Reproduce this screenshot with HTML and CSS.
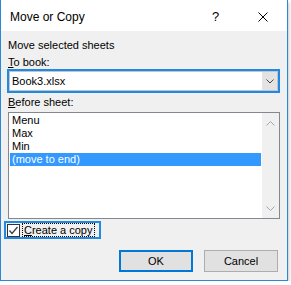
FILE: index.html
```html
<!DOCTYPE html>
<html lang="en">
<head>
  <meta charset="UTF-8">
  <title>Move or Copy</title>
  <link rel="stylesheet" href="styles.css">
</head>
<body>
  <div class="dialog">
    <!-- Заголовок окна -->
    <div class="titlebar">
      <span class="title">Move or Copy</span>
      <span class="help">?</span>
      <span class="close">
        <svg width="10" height="10" viewBox="0 0 10 10"><path d="M0.5 0.5 L9.5 9.5 M9.5 0.5 L0.5 9.5" stroke="#000" stroke-width="1" fill="none"/></svg>
      </span>
    </div>

    <div class="content">
      <div class="label">Move selected sheets</div>
      <div class="label gap-small"><u>T</u>o book:</div>

      <div class="combo-ring">
        <div class="combo">
          <span class="combo-value">Book3.xlsx</span>
          <span class="combo-btn">
            <svg width="8" height="5" viewBox="0 0 8 5"><polyline points="0.5,0.5 4,4 7.5,0.5" stroke="#444" stroke-width="1" fill="none"/></svg>
          </span>
        </div>
      </div>

      <div class="label gap-tiny"><u>B</u>efore sheet:</div>

      <div class="listbox">
        <ul class="items">
          <li>Menu</li>
          <li>Max</li>
          <li>Min</li>
          <li class="selected">(move to end)</li>
        </ul>
        <div class="scrollbar">
          <svg width="9" height="5" viewBox="0 0 9 5"><polyline points="0.5,4.5 4.5,0.5 8.5,4.5" stroke="#a6a6a6" stroke-width="1" fill="none"/></svg>
          <svg width="9" height="5" viewBox="0 0 9 5"><polyline points="0.5,0.5 4.5,4.5 8.5,0.5" stroke="#a6a6a6" stroke-width="1" fill="none"/></svg>
        </div>
      </div>

      <div class="check-ring">
        <span class="checkbox">
          <svg width="11" height="11" viewBox="0 0 11 11"><polyline points="1.5,5.5 4,8.5 9.5,2" stroke="#3c3c3c" stroke-width="1.3" fill="none"/></svg>
        </span>
        <span class="check-label"><u>C</u>reate a copy</span>
      </div>

      <div class="buttons">
        <button class="btn btn-default">OK</button>
        <button class="btn">Cancel</button>
      </div>
    </div>
  </div>
</body>
</html>
```

FILE: styles.css
```css
body {
  margin: 0;
  background: #fff;
  font-family: "Liberation Sans", Arial, sans-serif;
  color: #000;
}

/* Окно диалога */
.dialog {
  width: 286px;
  border: 1px solid #2a88d8;
  border-top: 0;
  box-shadow: 1px 2px 3px rgba(0, 0, 0, 0.22);
}

.titlebar {
  height: 31px;
  box-sizing: border-box;
  padding: 2px 19px 0 9px;
  display: flex;
  align-items: center;
  background: #fff;
  font-size: 12px;
}

.title {
  flex: 1;
}

.help {
  width: 8px;
  margin-right: 38px;
  font-size: 13px;
}

.close {
  display: flex;
  width: 10px;
}

/* Основная часть */
.content {
  height: 249px;
  box-sizing: border-box;
  padding: 8px 6px 8px 6px;
  background: #f0f0f0;
  font-size: 11px;
  line-height: 13px;
}

.label {
  padding-left: 1px;
}

.gap-small {
  margin-top: 4px;
}

.gap-tiny {
  margin-top: 3px;
}

.combo-ring {
  width: 273px;
  height: 24px;
  box-sizing: border-box;
  border: 2px solid #1e8ae6;
}

.combo {
  height: 20px;
  border: 1px solid #c4c4c4;
  box-sizing: border-box;
  background: #fff;
  display: flex;
  align-items: center;
}

.combo-value {
  flex: 1;
  padding-left: 2px;
}

.combo-btn {
  width: 15px;
  height: 18px;
  background: #e3e3e3;
  display: flex;
  align-items: center;
  justify-content: center;
}

.listbox {
  margin: 3px 0 0 1px;
  width: 272px;
  height: 107px;
  box-sizing: border-box;
  border: 1px solid #828790;
  background: #fff;
  display: flex;
}

.items {
  flex: 1;
  list-style: none;
  margin: 0;
  padding: 1px 1px 0 1px;
}

.items li {
  height: 13px;
  padding-left: 2px;
}

.items li.selected {
  background: #3399ff;
  color: #fff;
}

.scrollbar {
  width: 17px;
  background: #f0f0f0;
  display: flex;
  flex-direction: column;
  justify-content: space-between;
  align-items: center;
  padding: 8px 0 7px;
  box-sizing: border-box;
}

.check-ring {
  margin: 2px 0 0 -3px;
  width: 97px;
  height: 18px;
  box-sizing: border-box;
  border: 2px solid #1e8ae6;
  display: flex;
  align-items: center;
}

.checkbox {
  width: 13px;
  height: 13px;
  margin-left: 1px;
  box-sizing: border-box;
  border: 1px solid #333;
  background: #fff;
  display: flex;
  align-items: center;
  justify-content: center;
}

.check-label {
  margin-left: 3px;
  padding: 0 1px;
  outline: 1px dotted #000;
  line-height: 12px;
}

.buttons {
  margin: 11px 3px 0 0;
  display: flex;
  justify-content: flex-end;
  gap: 11px;
}

.btn {
  width: 74px;
  height: 22px;
  box-sizing: border-box;
  border: 1px solid #adadad;
  background: #e1e1e1;
  font-family: "Liberation Sans", Arial, sans-serif;
  font-size: 11px;
  color: #000;
  padding: 0;
}

.btn-default {
  border: 2px solid #0078d7;
}
```
